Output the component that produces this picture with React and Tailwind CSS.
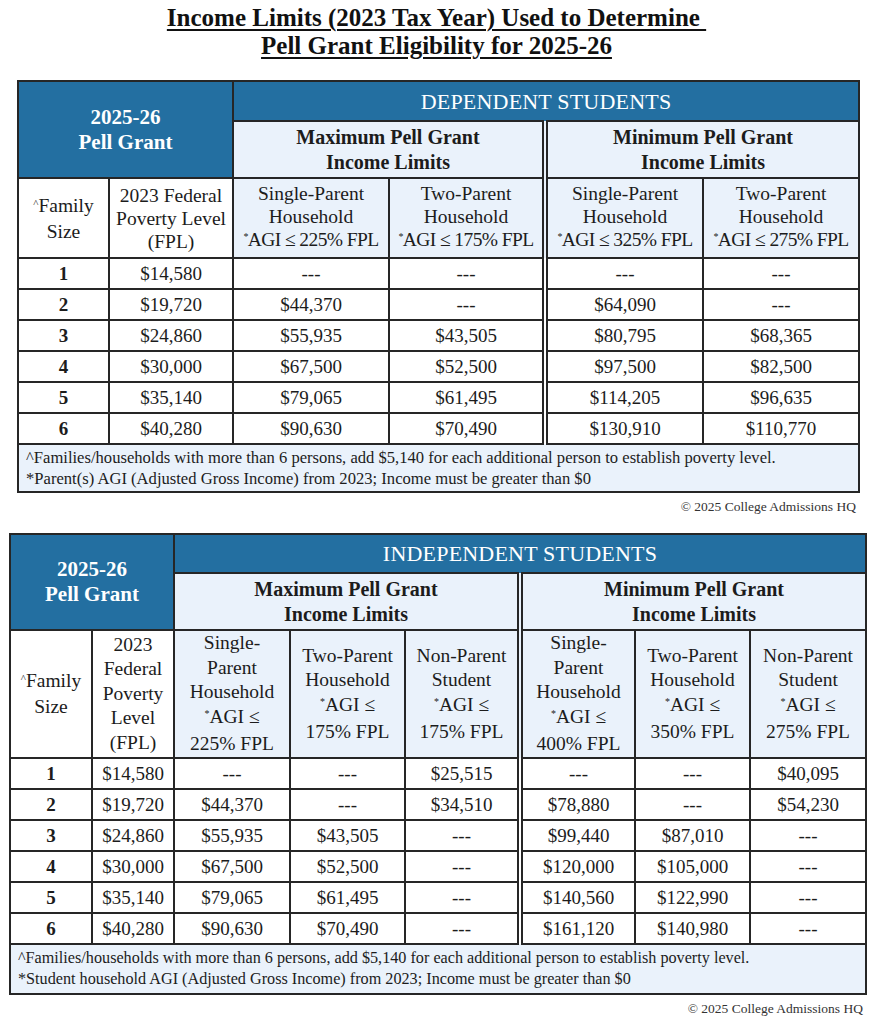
const dependentRows = [
  ["1", "$14,580", "---", "---", "---", "---"],
  ["2", "$19,720", "$44,370", "---", "$64,090", "---"],
  ["3", "$24,860", "$55,935", "$43,505", "$80,795", "$68,365"],
  ["4", "$30,000", "$67,500", "$52,500", "$97,500", "$82,500"],
  ["5", "$35,140", "$79,065", "$61,495", "$114,205", "$96,635"],
  ["6", "$40,280", "$90,630", "$70,490", "$130,910", "$110,770"],
];

const independentRows = [
  ["1", "$14,580", "---", "---", "$25,515", "---", "---", "$40,095"],
  ["2", "$19,720", "$44,370", "---", "$34,510", "$78,880", "---", "$54,230"],
  ["3", "$24,860", "$55,935", "$43,505", "---", "$99,440", "$87,010", "---"],
  ["4", "$30,000", "$67,500", "$52,500", "---", "$120,000", "$105,000", "---"],
  ["5", "$35,140", "$79,065", "$61,495", "---", "$140,560", "$122,990", "---"],
  ["6", "$40,280", "$90,630", "$70,490", "---", "$161,120", "$140,980", "---"],
];

const cell = "border-2 border-[#262626] p-0 text-center align-middle";
const dbl = "border-l-[6px] [border-left-style:double]";

function Star() {
  return <span className="relative -top-[6px] text-[10px]">*</span>;
}

function Caret() {
  return <span className="relative -top-[5px] text-[11px]">^</span>;
}

function Copyright() {
  return <p className="mt-[5px] pr-[2px] text-right text-[13.5px] leading-[18px] text-[#333]">© 2025 College Admissions HQ</p>;
}

function DependentTable() {
  const widths = [91, 124, 156, 156, 158, 156];
  return (
    <div className="ml-[17px] w-[841px]">
      <table className="w-[841px] table-fixed border-collapse border-2 border-[#262626]">
        <colgroup>
          {widths.map((w, i) => (
            <col key={i} style={{ width: w }} />
          ))}
        </colgroup>
        <thead>
          <tr className="h-[40px]">
            <th className={`${cell} bg-[#236fa1] text-[21px] font-bold leading-[25px] text-white`} colSpan={2} rowSpan={2}>
              2025-26
              <br />
              Pell Grant
            </th>
            <th className={`${cell} bg-[#236fa1] text-[22px] font-normal tracking-[0.2px] text-white`} colSpan={4}>
              DEPENDENT STUDENTS
            </th>
          </tr>
          <tr className="h-[57px] bg-[#eaf2fb] text-[20px] font-bold leading-[25px]">
            <th className={cell} colSpan={2}>
              Maximum Pell Grant
              <br />
              Income Limits
            </th>
            <th className={`${cell} ${dbl}`} colSpan={2}>
              Minimum Pell Grant
              <br />
              Income Limits
            </th>
          </tr>
          <tr className="h-[80px] text-[19.5px] font-normal leading-[23px]">
            <th className={`${cell} bg-white font-normal`}>
              <Caret />
              Family
              <br />
              Size
            </th>
            <th className={`${cell} bg-white font-normal`}>
              2023 Federal
              <br />
              Poverty Level
              <br />
              (FPL)
            </th>
            {["225", "175", "325", "275"].map((p, i) => (
              <th key={p} className={`${cell} bg-[#eaf2fb] font-normal ${i === 2 ? dbl : ""}`}>
                {i % 2 === 0 ? "Single-Parent" : "Two-Parent"}
                <br />
                Household
                <br />
                <span className="whitespace-nowrap tracking-[-0.6px]">
                  <Star />
                  AGI ≤ {p}% FPL
                </span>
              </th>
            ))}
          </tr>
        </thead>
        <tbody className="text-[19px]">
          {dependentRows.map((row) => (
            <tr key={row[0]} className="h-[31px]">
              {row.map((v, i) => (
                <td key={i} className={`${cell} leading-[22px] ${i === 0 ? "font-bold" : ""} ${i === 4 ? dbl : ""}`}>
                  {v}
                </td>
              ))}
            </tr>
          ))}
          <tr className="h-[48px] bg-[#eaf2fb]">
            <td className={`${cell} px-[7px] text-left text-[16.6px] leading-[21px]`} colSpan={6}>
              ^Families/households with more than 6 persons, add $5,140 for each additional person to establish poverty level.
              <br />
              *Parent(s) AGI (Adjusted Gross Income) from 2023; Income must be greater than $0
            </td>
          </tr>
        </tbody>
      </table>
      <Copyright />
    </div>
  );
}

function IndependentTable() {
  const widths = [82, 82, 116, 115, 115, 115, 115, 116];
  const heads = [
    [["Single-", "Parent", "Household"], "225"],
    [["Two-Parent", "Household"], "175"],
    [["Non-Parent", "Student"], "175"],
    [["Single-", "Parent", "Household"], "400"],
    [["Two-Parent", "Household"], "350"],
    [["Non-Parent", "Student"], "275"],
  ];
  return (
    <div className="ml-[9px] w-[856px]">
      <table className="w-[856px] table-fixed border-collapse border-2 border-[#262626]">
        <colgroup>
          {widths.map((w, i) => (
            <col key={i} style={{ width: w }} />
          ))}
        </colgroup>
        <thead>
          <tr className="h-[39px]">
            <th className={`${cell} bg-[#236fa1] text-[21px] font-bold leading-[25px] text-white`} colSpan={2} rowSpan={2}>
              2025-26
              <br />
              Pell Grant
            </th>
            <th className={`${cell} bg-[#236fa1] text-[22px] font-normal tracking-[0.2px] text-white`} colSpan={6}>
              INDEPENDENT STUDENTS
            </th>
          </tr>
          <tr className="h-[57px] bg-[#eaf2fb] text-[20px] font-bold leading-[25px]">
            <th className={cell} colSpan={3}>
              Maximum Pell Grant
              <br />
              Income Limits
            </th>
            <th className={`${cell} ${dbl}`} colSpan={3}>
              Minimum Pell Grant
              <br />
              Income Limits
            </th>
          </tr>
          <tr className="h-[128px] text-[19.5px] font-normal leading-[24.5px]">
            <th className={`${cell} bg-white font-normal`}>
              <Caret />
              Family
              <br />
              Size
            </th>
            <th className={`${cell} bg-white font-normal`}>
              2023
              <br />
              Federal
              <br />
              Poverty
              <br />
              Level
              <br />
              (FPL)
            </th>
            {heads.map(([lines, p], i) => (
              <th key={i} className={`${cell} bg-[#eaf2fb] font-normal ${i === 3 ? dbl : ""}`}>
                {lines.map((l) => (
                  <span key={l}>
                    {l}
                    <br />
                  </span>
                ))}
                <span className="whitespace-nowrap">
                  <Star />
                  AGI ≤
                </span>
                <br />
                <span className="whitespace-nowrap">{p}% FPL</span>
              </th>
            ))}
          </tr>
        </thead>
        <tbody className="text-[19px]">
          {independentRows.map((row) => (
            <tr key={row[0]} className="h-[31px]">
              {row.map((v, i) => (
                <td key={i} className={`${cell} leading-[22px] ${i === 0 ? "font-bold" : ""} ${i === 5 ? dbl : ""}`}>
                  {v}
                </td>
              ))}
            </tr>
          ))}
          <tr className="h-[50px] bg-[#eaf2fb]">
            <td className={`${cell} px-[7px] text-left text-[16.2px] leading-[21px]`} colSpan={8}>
              ^Families/households with more than 6 persons, add $5,140 for each additional person to establish poverty level.
              <br />
              *Student household AGI (Adjusted Gross Income) from 2023; Income must be greater than $0
            </td>
          </tr>
        </tbody>
      </table>
      <Copyright />
    </div>
  );
}

export default function App() {
  return (
    <div className="h-[1024px] w-[873px] overflow-hidden bg-white text-[#1c1c1c] [font-family:'Liberation_Serif','Times_New_Roman',serif]">
      <div className="pt-[4px] text-center text-[25px] font-bold leading-[28px] text-[#111]">
        <p>
          <span className="underline decoration-2 underline-offset-[3px]">Income Limits (2023 Tax Year) Used to Determine&nbsp;</span>
        </p>
        <p>
          <span className="underline decoration-2 underline-offset-[3px]">Pell Grant Eligibility for 2025-26</span>
        </p>
      </div>
      <div className="mt-[20px]">
        <DependentTable />
      </div>
      <div className="mt-[17px]">
        <IndependentTable />
      </div>
    </div>
  );
}
